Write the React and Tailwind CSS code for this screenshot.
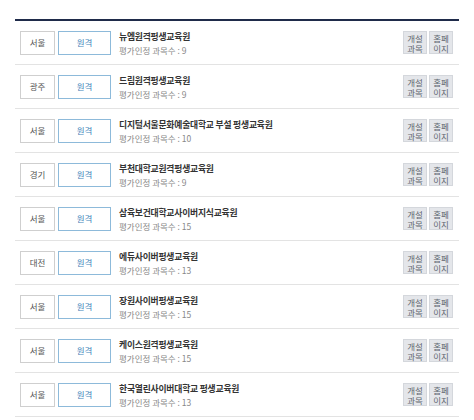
import React from 'react';

const items = [
  { region: '서울', name: '뉴엠원격평생교육원', count: 9 },
  { region: '광주', name: '드림원격평생교육원', count: 9 },
  { region: '서울', name: '디지털서울문화예술대학교 부설 평생교육원', count: 10 },
  { region: '경기', name: '부천대학교원격평생교육원', count: 9 },
  { region: '서울', name: '삼육보건대학교사이버지식교육원', count: 15 },
  { region: '대전', name: '에듀사이버평생교육원', count: 13 },
  { region: '서울', name: '장원사이버평생교육원', count: 15 },
  { region: '서울', name: '케이스원격평생교육원', count: 15 },
  { region: '서울', name: '한국열린사이버대학교 평생교육원', count: 13 },
];

function Row({ item }) {
  return (
    <div className="flex items-center h-[44px] border-b border-[#e3e3e3] pl-[5px] pr-[6px]">
      <div className="w-[35px] h-[24px] border border-[#cfcfcf] flex items-center justify-center text-[8.5px] text-[#555]">
        {item.region}
      </div>
      <div className="w-[53px] h-[24px] ml-[3px] border border-[#8dbada] flex items-center justify-center text-[8.5px] text-[#3f84ba]">
        원격
      </div>
      <div className="ml-[8px] flex-1 flex flex-col pt-[1px]">
        <div className="text-[8.8px] leading-[13px] font-bold tracking-[-0.2px] text-[#333]">{item.name}</div>
        <div className="text-[8.5px] leading-[13px] mt-[1px] text-[#888]">평가인정 과목수 : {item.count}</div>
      </div>
      <div className="flex gap-[2px]">
        <div className="w-[24px] h-[23px] bg-[#e4e6ea] border border-[#d4d7dc] flex items-center justify-center text-center text-[8.5px] leading-[10px] text-[#5f6670]">
          개설<br />과목
        </div>
        <div className="w-[24px] h-[23px] bg-[#e4e6ea] border border-[#d4d7dc] flex items-center justify-center text-center text-[8.5px] leading-[10px] text-[#5f6670]">
          홈페<br />이지
        </div>
      </div>
    </div>
  );
}

export default function App() {
  return (
    <div
      className="w-[474px] h-[420px] bg-white pt-[19px] px-[15px] overflow-hidden"
      style={{ fontFamily: '"Noto Sans CJK KR", "Noto Sans", sans-serif' }}
    >
      <div className="border-t-2 border-[#1f2b4a]">
        {items.map((item, i) => (
          <Row key={i} item={item} />
        ))}
      </div>
    </div>
  );
}
